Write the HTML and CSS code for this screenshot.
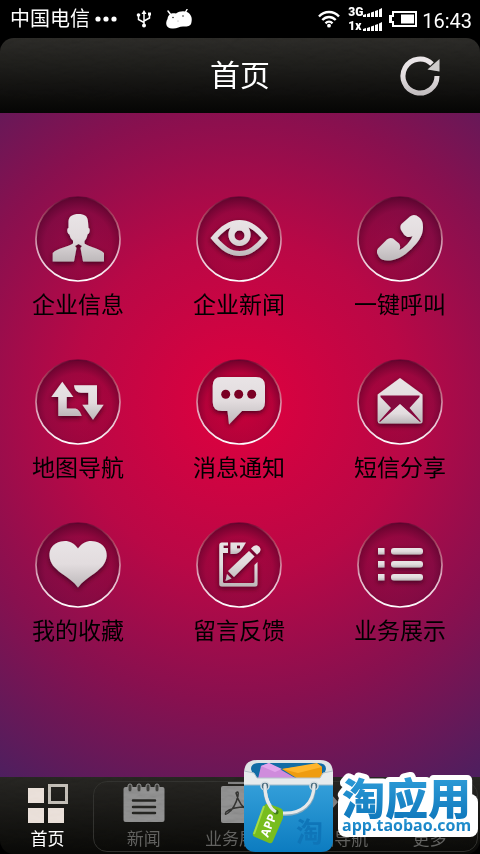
FILE: index.html
```html
<!DOCTYPE html>
<html lang="zh-CN">
<head>
  <meta charset="UTF-8">
  <meta name="viewport" content="width=device-width, initial-scale=1.0">
  <title>首页</title>
  <link rel="stylesheet" href="styles.css">
</head>
<body>

  <!-- Shared gradients, leather grain and the round icon plate -->
  <svg class="defs" width="0" height="0" aria-hidden="true">
    <defs>
      <linearGradient id="silver" x1="0" y1="0" x2="0" y2="1">
        <stop offset="0" stop-color="#e9e4e6"/>
        <stop offset="0.5" stop-color="#e2dcde"/>
        <stop offset="1" stop-color="#bdb8ba"/>
      </linearGradient>
      <linearGradient id="rim" x1="0" y1="0" x2="0" y2="1">
        <stop offset="0" stop-color="#4a0028" stop-opacity="0.6"/>
        <stop offset="0.2" stop-color="#c88" stop-opacity="0.4"/>
        <stop offset="0.6" stop-color="#eccbd8" stop-opacity="0.8"/>
        <stop offset="1" stop-color="#fff"/>
      </linearGradient>
      <radialGradient id="plate" cx="0.5" cy="0.56" r="0.57">
        <stop offset="0" stop-color="#500028" stop-opacity="0.16"/>
        <stop offset="0.7" stop-color="#500028" stop-opacity="0.26"/>
        <stop offset="1" stop-color="#400020" stop-opacity="0.7"/>
      </radialGradient>
      <filter id="drop" x="-30%" y="-30%" width="160%" height="160%">
        <feDropShadow dx="0" dy="2" stdDeviation="2.5" flood-color="#30001a" flood-opacity="0.8"/>
      </filter>
      <filter id="leather" x="0" y="0" width="100%" height="100%">
        <feTurbulence type="fractalNoise" baseFrequency="0.09 0.2" numOctaves="3" seed="4"/>
        <feDiffuseLighting surfaceScale="1.2" lighting-color="#fff">
          <feDistantLight azimuth="90" elevation="40"/>
        </feDiffuseLighting>
      </filter>
      <g id="disc">
        <circle cx="43" cy="43" r="42" fill="url(#plate)"/>
        <circle cx="43" cy="43" r="42" fill="none" stroke="url(#rim)" stroke-width="1.7"/>
      </g>
    </defs>
  </svg>

  <div class="status-bar">
    <span class="carrier">中国电信</span>
    <svg class="dots" width="22" height="6" viewBox="0 0 22 6" fill="#fff"><circle cx="3" cy="3" r="2.6"/><circle cx="11" cy="3" r="2.6"/><circle cx="19" cy="3" r="2.6"/></svg>
    <svg class="usb" width="16" height="18" viewBox="0 0 16 18" fill="none" stroke="#fff" stroke-width="1.5">
      <path d="M8 3V15M8 12.500L2.500 9.500V5M8 11L13.500 8V4"/>
      <path d="M8 0L10.500 4H5.500Z" fill="#fff" stroke="none"/>
      <circle cx="8" cy="15.500" r="2" fill="#fff" stroke="none"/><circle cx="2.500" cy="5" r="1.800" fill="#fff" stroke="none"/>
      <path d="M12 2.500h3v3h-3z" fill="#fff" stroke="none"/>
    </svg>
    <svg class="droid" width="28" height="20" viewBox="0 0 28 20">
      <path d="M3 2L6 6M22 0.500L20 4" stroke="#fff" stroke-width="1.500" stroke-linecap="round"/>
      <path d="M2.500 10C3 5 7 3.500 11 4.500C14 2 19 1.500 22 3C26 5 27.500 9 26.500 13C26 17 23 18 18 17.500C14 17.500 12 20 7 19.500C1 19.500 0 14 2.500 10Z" fill="#fff"/>
      <circle cx="8" cy="8.500" r="0.800" fill="#222"/><circle cx="18" cy="7" r="0.800" fill="#222"/><circle cx="13" cy="12" r="0.500" fill="#888"/>
    </svg>
    <svg class="wifi" width="22" height="18" viewBox="0 0 22 18" fill="none" stroke="#fff" stroke-width="2.400">
      <path d="M1 6.500C6.500 0.500 15.500 0.500 21 6.500M4.300 10C8.300 6 13.700 6 17.700 10M7.500 13.300C9.500 11.300 12.500 11.300 14.500 13.300"/>
      <circle cx="11" cy="15.700" r="1.900" fill="#fff" stroke="none"/>
    </svg>
    <div class="signal">
      <div class="signal-row"><span>3G</span><svg width="19" height="9" viewBox="0 0 19 9" fill="#fff"><path d="M0 9V7L3 6V9ZM4 9V6L7 5V9ZM8 9V4.500L11 3.500V9ZM12 9V3L15 2V9ZM16 9V1.500L19 0V9Z"/></svg></div>
      <div class="signal-row"><span>1x</span><svg width="19" height="9" viewBox="0 0 19 9" fill="#fff"><path d="M0 9V7L3 6V9ZM4 9V6L7 5V9ZM8 9V4.500L11 3.500V9ZM12 9V3L15 2V9ZM16 9V1.500L19 0V9Z"/></svg></div>
    </div>
    <svg class="battery" width="28" height="16" viewBox="0 0 28 16">
      <path d="M4 1H27V15H4V11H1V5H4Z" fill="none" stroke="#fff" stroke-width="2"/>
      <path d="M0 5h3v6H0zM12 3.500H25V12.500H12Z" fill="#fff"/>
    </svg>
    <span class="clock">16:43</span>
  </div>

  <header class="title-bar">
    <svg class="grain" aria-hidden="true"><rect width="100%" height="100%" filter="url(#leather)"/></svg>
    <h1 class="title">首页</h1>
    <button class="refresh" type="button" aria-label="刷新">
      <svg width="40" height="40" viewBox="0 0 40 40">
        <path d="M37 20A17 17 0 1 1 32 8" fill="none" stroke="url(#silver)" stroke-width="5"/>
        <path d="M39.500 3V15.500L27.500 13.500Z" fill="#c9c6c6"/>
      </svg>
    </button>
  </header>

  <main class="home">
    <a class="item" href="#">
      <svg class="icon" viewBox="0 0 86 86"><use href="#disc"/>
        <g fill="url(#silver)" filter="url(#drop)">
          <path d="M33.500 25C34 20 38 18 43.500 18C49 18 53 20 53 26L53.500 32C55.500 32 55 38 52.500 38.500C52 42 50.500 44 49.500 45V47.500C54 51 64 52 69 57V65.500H48L45.500 52L47 50L43.500 48L40 50L41.500 52L39 65.500H17.700V57C22 52 33 51 38 47.500V44.500C36 43 35 41 34.500 38.500C32 38 31.500 32 33.500 32Z"/>
        </g>
      </svg>
      <span class="label">企业信息</span>
    </a>
    <a class="item" href="#">
      <svg class="icon" viewBox="0 0 86 86"><use href="#disc"/>
        <g fill="url(#silver)" fill-rule="evenodd" filter="url(#drop)">
          <path d="M14.500 42C25 29 34 24 43.500 24C53 24 62 29 72 42C62 55 53 60 43.500 60C34 60 25 55 14.500 42ZM21.500 42C29 50.500 35 55 43.500 55C52 55 58 50.500 65.500 42C60 36 56 33 52.500 31.500C58 41 52 50 43.500 50C35 50 29 41 34.500 31.500C30 33.500 26 37 21.500 42ZM43.500 34.500A5 5 0 1 0 43.500 44.500A5 5 0 1 0 43.500 34.500Z"/>
        </g>
      </svg>
      <span class="label">企业新闻</span>
    </a>
    <a class="item" href="#">
      <svg class="icon" viewBox="0 0 86 86"><use href="#disc"/>
        <path fill="url(#silver)" filter="url(#drop)" d="M44.500 28L53 20.500Q56 18 59.500 19.500L63 22Q66 25 66 31C66 37 64 42 59 48C53 55 45 62 36 64C30 65 25 65 22 61L20 57Q19.500 54 21 52.500L30 43.500Q33 41 36 42.500L42 47.500Q44 50 42.500 54C47 52 54 45 55.500 40C52 42 49 41 47 38.500L44 34Q42.500 30.500 44.500 28Z"/>
      </svg>
      <span class="label">一键呼叫</span>
    </a>
    <a class="item" href="#">
      <svg class="icon" viewBox="0 0 86 86"><use href="#disc"/>
        <g fill="url(#silver)" filter="url(#drop)">
          <path d="M27.300 22.700L38.300 38H31.700V49.500H39C43 49.500 45 52 46.700 57H23.300V38H16.300Z"/>
          <path d="M39 26.300H62V45.700H68.700L58 60.700L47.300 45.700H53.300V33.700H46C42 33.700 39.500 31 39 26.300Z"/>
        </g>
      </svg>
      <span class="label">地图导航</span>
    </a>
    <a class="item" href="#">
      <svg class="icon" viewBox="0 0 86 86"><use href="#disc"/>
        <path fill="url(#silver)" filter="url(#drop)" d="M25 18H60Q69 18 69 27V43Q69 52 60 52H46L33 65.500L31.500 52H26Q16.700 52 16.700 43V27Q16.700 18 25 18Z"/>
        <g fill="#7a0024"><circle cx="29.700" cy="35.300" r="4.500"/><circle cx="42.700" cy="35.300" r="4.500"/><circle cx="55.700" cy="35.300" r="4.500"/></g>
      </svg>
      <span class="label">消息通知</span>
    </a>
    <a class="item" href="#">
      <svg class="icon" viewBox="0 0 86 86"><use href="#disc"/>
        <path fill="url(#silver)" filter="url(#drop)" d="M43 19L65.500 35.500V62Q65.500 64.500 63 64.500H23Q20.700 64.500 20.700 62V35.500Z"/>
        <path fill="#850a3e" d="M23.500 36.500H62.500V38L52.500 49L64 62.500L62.500 63L43 45.500L23.500 63L22 62.500L34 49L23.500 38Z"/>
        <path fill="url(#silver)" d="M43 45L64 64H22Z"/>
      </svg>
      <span class="label">短信分享</span>
    </a>
    <a class="item" href="#">
      <svg class="icon" viewBox="0 0 86 86"><use href="#disc"/>
        <path fill="url(#silver)" filter="url(#drop)" d="M43 26.500C48 19 55 18 60 19.500C68 21 72 27 71.700 34C71 42 66 46 60 51C53 56 47 60 43 65.500C39 60 33 56 26 51C20 46 15 42 14.500 34C14 27 18 21 26 19.500C31 18 38 19 43 26.500Z"/>
      </svg>
      <span class="label">我的收藏</span>
    </a>
    <a class="item" href="#">
      <svg class="icon" viewBox="0 0 86 86"><use href="#disc"/>
        <g fill="url(#silver)" filter="url(#drop)">
          <path d="M32 20.500V23.500H27.500V26H32V31H27V60Q27 61 28 61H57Q58.500 61 58.500 59.500V43L61.500 40V62Q61.500 64.500 59 64.500H26Q23.300 64.500 23.300 62V23Q23.300 20.500 26 20.500Z"/>
          <path fill-rule="evenodd" d="M34.500 20.500H50L46 27Q43 32 38 32H34.500ZM41 23.500V26.500H44V23.500Z"/>
          <path d="M53 29L58.500 34.500L38 55L32 49ZM31 52L35.500 56.500L29.500 59ZM55 26.500Q60 21 63.500 25Q66.500 29 61 32.500Z"/>
        </g>
      </svg>
      <span class="label">留言反馈</span>
    </a>
    <a class="item" href="#">
      <svg class="icon" viewBox="0 0 86 86"><use href="#disc"/>
        <g fill="url(#silver)" filter="url(#drop)">
          <rect x="21" y="26" width="6.500" height="6.500"/><rect x="34" y="26" width="32" height="6.500" rx="3"/>
          <rect x="21" y="39" width="6.500" height="6.500"/><rect x="34" y="39" width="32" height="6.500" rx="3"/>
          <rect x="21" y="52" width="6.500" height="6.500"/><rect x="34" y="52" width="32" height="6.500" rx="3"/>
        </g>
      </svg>
      <span class="label">业务展示</span>
    </a>
  </main>

  <nav class="tabs">
    <svg class="grain" aria-hidden="true"><rect width="100%" height="100%" filter="url(#leather)"/></svg>
    <a class="tab active" href="#">
      <svg width="44" height="42" viewBox="0 0 44 42" fill="#e8ddd6">
        <path d="M2 6H18V21H2ZM2 26H18V41H2ZM22 26H38V41H22Z"/>
        <path d="M23.500 3.500H40.500V20.500H23.500Z" fill="none" stroke="#bdb8b0" stroke-width="3"/>
      </svg>
      <span>首页</span>
    </a>
    <div class="tab-group">
      <a class="tab" href="#">
        <svg width="44" height="42" viewBox="0 0 44 42">
          <rect x="1.500" y="5" width="41" height="35" rx="2" fill="#868686"/>
          <g fill="#3a3a38" stroke="#888" stroke-width="1"><rect x="6" y="2" width="4" height="8" rx="2"/><rect x="15" y="2" width="4" height="8" rx="2"/><rect x="24" y="2" width="4" height="8" rx="2"/><rect x="33" y="2" width="4" height="8" rx="2"/></g>
          <path d="M11 18.500H33M11 25H33M11 31H33" stroke="#22221f" stroke-width="2.500" stroke-linecap="round"/>
        </svg>
        <span>新闻</span>
      </a>
      <a class="tab" href="#">
        <svg width="44" height="42" viewBox="0 0 44 42">
          <path d="M11 1H42V36" fill="none" stroke="#777" stroke-width="2"/>
          <rect x="4" y="4" width="36" height="37" rx="2" fill="#868686"/>
          <path d="M19 11Q22 8 21 14Q18 26 11 31Q7 34 9 30Q14 25 30 25Q36 27 31 28Q23 25 19 11Z" fill="none" stroke="#30302e" stroke-width="1.500"/>
        </svg>
        <span>业务展示</span>
      </a>
      <a class="tab" href="#">
        <svg width="44" height="42" viewBox="0 0 44 42">
          <path d="M2 14H14V6L26 20L14 34V26H2Z" fill="#777"/>
        </svg>
        <span>地图导航</span>
      </a>
      <a class="tab" href="#">
        <svg width="44" height="42" viewBox="0 0 44 42" fill="#777"><circle cx="10" cy="24" r="4"/><circle cx="22" cy="24" r="4"/><circle cx="34" cy="24" r="4"/></svg>
        <span>更多</span>
      </a>
    </div>
  </nav>

  <!-- App store badge over the tab bar -->
  <svg class="store-badge" width="240" height="100" viewBox="0 0 240 100">
    <defs>
      <linearGradient id="bag" x1="0" y1="0" x2="0" y2="1"><stop offset="0" stop-color="#35a0da"/><stop offset="1" stop-color="#0c7cc0"/></linearGradient>
      <linearGradient id="word" x1="0" y1="0" x2="0" y2="1"><stop offset="0" stop-color="#35a5de"/><stop offset="1" stop-color="#0a72b8"/></linearGradient>
    </defs>
    <path d="M4 19Q4 6 17 6H80Q93 6 93 19V30H4Z" fill="#dfe4e6"/>
    <path d="M14 24L11 15Q11 9 19 9H78Q86 9 86 15L83 24Z" fill="#126ca5"/>
    <path d="M18 25L21 12L29 9L57 25Z" fill="#cf8cdc"/><path d="M21 12L29 9L42 15L35 18Z" fill="#e2a5ec"/>
    <path d="M42 15L78 10L82 13V25H58Z" fill="#ef9c10"/><path d="M42 15L77 9L82 13L58 19Z" fill="#ffb52c"/>
    <path d="M4 28H93V86Q93 98 81 98H16Q4 98 4 86Z" fill="url(#bag)"/>
    <path d="M4 17L14 19L17 24H80L83 19L93 17V31H4Z" fill="#e7ebed"/><path d="M4 31H93" stroke="#9fb9c8"/>
    <path d="M4 17L14 19L17 24H80L83 19L93 17" fill="none" stroke="#b5c4cc"/>
    <text class="bag-char" x="56" y="88">淘</text>
    <circle cx="25" cy="32" r="4" fill="#496b7d" stroke="#d8e0e4" stroke-width="1.500"/><circle cx="74" cy="32" r="4" fill="#496b7d" stroke="#d8e0e4" stroke-width="1.500"/>
    <path d="M25 32C25 46 30 58 43 60C62 61 74 50 74 32" fill="none" stroke="#86a9bd" stroke-width="4"/>
    <path d="M25 31C25 45 30 57 43 59C62 60 74 49 74 31" fill="none" stroke="#e6e9ea" stroke-width="3" stroke-linecap="round"/>
    <path d="M24 52Q26 49 29 50L40 54Q43 55 43 58L43 64L33 87Q32 90 29 89L15 83Q12 82 13 79Z" fill="#78bd1e"/>
    <path d="M24 52L14 80" stroke="#a5dc48" stroke-width="2"/><circle cx="36" cy="58" r="2.500" fill="#3d7c16"/>
    <path d="M36 58Q27 53 25 36" fill="none" stroke="#e6e9ea" stroke-width="3"/>
    <text class="tag-text" transform="translate(28 84) rotate(-68)">APP</text>
    <rect x="98" y="40" width="140" height="43" rx="8" fill="#fff"/>
    <text class="word" x="102" y="61">淘应用</text>
    <text class="site" x="102" y="77">app.taobao.com</text>
  </svg>

</body>
</html>
```
FILE: styles.css
```css
* {
  box-sizing: border-box;
}

body {
  margin: 0;
  min-height: 100vh;
  display: flex;
  flex-direction: column;
  position: relative;
  background: #000;
  color: #fff;
  font-family: Roboto, "Noto Sans CJK SC", sans-serif;
}

a {
  color: inherit;
  text-decoration: none;
}

svg {
  display: block;
  flex: none;
}

.defs {
  position: absolute;
}

/* Status bar */
.status-bar {
  height: 38px;
  padding: 0 8px 0 10px;
  display: flex;
  align-items: center;
}

.carrier {
  font-size: 20px;
  line-height: 38px;
}

.dots {
  margin-left: 5px;
}

.usb {
  margin-left: 19px;
}

.droid {
  margin-left: 13px;
}

.wifi {
  margin-left: auto;
}

.signal {
  margin-left: 8px;
}

.signal-row {
  display: flex;
  align-items: center;
  justify-content: space-between;
  width: 34px;
  height: 14px;
  font-size: 12px;
  line-height: 14px;
  font-weight: 900;
}

.battery {
  margin-left: 7px;
}

.clock {
  margin-left: 5px;
  padding-top: 3px;
  font-size: 20px;
  line-height: 38px;
}

/* Title bar */
.title-bar {
  position: relative;
  height: 75px;
  padding: 0 40px;
  display: grid;
  grid-template-columns: 1fr auto 1fr;
  align-items: center;
  overflow: hidden;
  border-radius: 14px 14px 0 0;
  background: linear-gradient(#292825, #040403);
}

.grain {
  position: absolute;
  top: 0;
  left: 0;
  width: 100%;
  height: 100%;
  opacity: 0.12;
  mix-blend-mode: overlay;
}

.title {
  grid-column: 2;
  margin: 0;
  font-size: 30px;
  line-height: 40px;
  font-weight: normal;
}

.refresh {
  justify-self: end;
  padding: 0;
  border: 0;
  background: none;
}

/* Icon grid */
.home {
  flex: 1;
  padding: 83px 34px 40px 32px;
  display: grid;
  grid-template-columns: repeat(3, auto);
  justify-content: space-between;
  align-content: start;
  row-gap: 41px;
  background: radial-gradient(circle 480px at 50% 44%, #e0003e 0%, #b90846 35%, #88104f 62%, #4a2060 94%);
}

.item {
  display: flex;
  flex-direction: column;
  align-items: center;
  gap: 12px;
}

.icon {
  width: 86px;
  height: 86px;
}

.label {
  color: #000;
  font-size: 23px;
  line-height: 24px;
}

/* Bottom tabs */
.tabs {
  position: relative;
  height: 77px;
  display: flex;
  overflow: hidden;
  border-radius: 0 0 14px 14px;
  background: linear-gradient(#242320, #080806);
}

.tab {
  flex: 1;
  display: flex;
  flex-direction: column;
  align-items: center;
  gap: 4px;
  color: #5a5a58;
  font-size: 17px;
  line-height: 22px;
}

.tab.active {
  padding-top: 5px;
  color: #fff;
}

.tab-group {
  flex: 4;
  margin: 4px 2px 2px -2px;
  padding-left: 2px;
  display: flex;
  border: 1px solid #2e2e2b;
  border-radius: 14px;
}

.store-badge {
  position: absolute;
  right: 0;
  bottom: 0;
}

.word,
.site {
  fill: url(#word);
  stroke: #fff;
  stroke-width: 10px;
  stroke-linejoin: round;
  paint-order: stroke;
}

.word {
  font-family: "Noto Sans CJK SC", sans-serif;
  font-size: 43px;
  font-weight: 900;
}

.site {
  stroke-width: 3px;
  font-family: "Open Sans", sans-serif;
  font-size: 16px;
  font-weight: bold;
}

.bag-char {
  fill: #0f75b8;
  font-family: "Noto Sans CJK SC", sans-serif;
  font-size: 27px;
  font-weight: bold;
}

.tag-text {
  fill: #fff;
  font-family: "Open Sans", sans-serif;
  font-size: 12px;
  font-weight: bold;
}
```
